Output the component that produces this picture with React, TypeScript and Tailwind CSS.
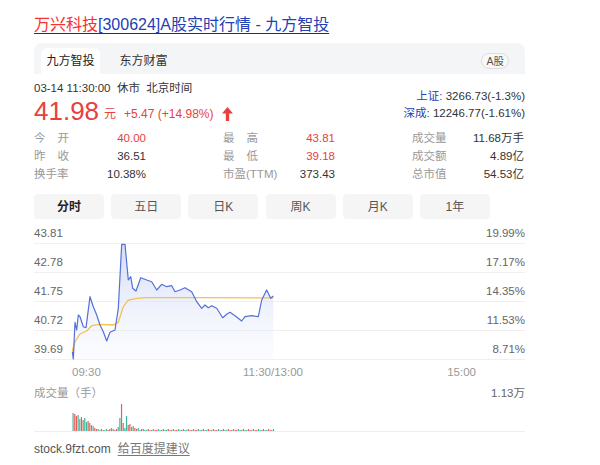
const RED = "#e8413d";

const stats = [
  [
    { label: "今开", value: "40.00", red: true },
    { label: "最高", value: "43.81", red: true },
    { label: "成交量", value: "11.68万手" },
  ],
  [
    { label: "昨收", value: "36.51" },
    { label: "最低", value: "39.18", red: true },
    { label: "成交额", value: "4.89亿" },
  ],
  [
    { label: "换手率", value: "10.38%" },
    { label: "市盈(TTM)", value: "373.43" },
    { label: "总市值", value: "54.53亿" },
  ],
];

const ranges = ["分时", "五日", "日K", "周K", "月K", "1年"];

const axisRows = [
  ["43.81", "19.99%"],
  ["42.78", "17.17%"],
  ["41.75", "14.35%"],
  ["40.72", "11.53%"],
  ["39.69", "8.71%"],
];

// price line, page coords
const pricePts: [number, number][] = [
  [72.3, 351.7], [73.3, 359], [75, 322.3], [76.7, 330], [78.3, 315], [80, 316.7],
  [83.3, 326.7], [86, 327.7], [90, 296.7], [93.3, 306.7], [96.7, 315], [100, 325],
  [103.3, 331.7], [106.7, 341], [110, 332.3], [115, 330], [118.3, 308.3], [121.7, 244.3],
  [125, 244.3], [128.3, 280], [130.7, 276.7], [132.7, 288.3], [136, 291], [140.7, 277.7],
  [146.7, 280], [151.7, 281.7], [156.7, 290], [161.7, 284.3], [166.7, 286.7], [171.7, 285.7],
  [175, 291.7], [180, 290], [185, 287.7], [191.7, 291.7], [196.7, 301.7], [201.7, 308.3],
  [205, 305], [208.3, 307.7], [211.7, 305.7], [216.7, 308.3], [222.7, 317.7], [226.7, 314.3],
  [230, 312.3], [235, 315.7], [241.7, 321], [245, 316.7], [251.7, 315.7], [258.3, 316.7],
  [261.7, 300], [266.7, 290], [270.7, 298.3], [273.3, 296],
];

const avgPts: [number, number][] = [
  [72.3, 351], [75, 341.7], [80, 334], [86.7, 331], [91.7, 325.7], [100, 324.3],
  [113.3, 325], [118.3, 322.3], [123.3, 306.7], [128.3, 300], [136.7, 298.3],
  [146.7, 297.7], [200, 297.7], [273.3, 297.9],
];

const toPath = (pts: [number, number][]) =>
  pts.map(([x, y], i) => `${i ? "L" : "M"}${x} ${y}`).join(" ");

const head = [18, 17, 15, 16, 12, 14, 11, 13, 9, 10, 8, 6, 5, 3, 2, 2, 1, 2, 1, 1, 2, 1, 2, 3, 2, 1, 2, 4, 13, 27, 8, 3, 15, 6, 7, 4, 5, 3, 2, 3, 1, 2];
const volumes = Array.from({ length: 121 }, (_, i) =>
  i < head.length ? head[i] : 1 + ((i * 7) % 3 === 0 ? 1 : 0)
);

function StatCell({ label, value, red }: { label: string; value: string; red?: boolean }) {
  const isShort = label.length === 2;
  return (
    <div className="flex items-center justify-between">
      <span
        className={`shrink-0 whitespace-nowrap text-[#999] ${isShort ? "w-[35px] [text-align-last:justify]" : ""}`}
      >
        {label}
      </span>
      <span className={red ? "text-[#e8413d]" : "text-[#333]"}>{value}</span>
    </div>
  );
}

export default function App() {
  return (
    <div className="w-[600px] h-[465px] bg-white pl-[34px] pt-[15px] font-['Liberation_Sans','Noto_Sans_CJK_SC',sans-serif] text-[11.5px] text-[#333]">
      <div className="w-[491px]">
        {/* title */}
        <div className="text-[16px] leading-[20px] underline underline-offset-[3px] whitespace-nowrap">
          <span className="text-[#f73131]">万兴科技</span>
          <span className="text-[#2440b3]">[300624]A股实时行情 - 九方智投</span>
        </div>

        {/* source tabs */}
        <div className="mt-[8px] h-[31px] rounded-t-[8px] bg-[#f4f5f7] flex items-end justify-between pl-[7px] pr-[16px]">
          <div className="flex gap-[14px] text-[12px]">
            <div className="w-[59px] h-[26px] rounded-t-[6px] bg-white flex items-center justify-center text-[#222]">
              九方智投
            </div>
            <div className="w-[59px] h-[26px] flex items-center justify-center text-[#333]">东方财富</div>
          </div>
          <div className="mb-[5px] h-[16px] px-[4px] rounded-full border border-[#ddd] bg-[#f8f8f8] text-[10.5px] leading-[14px] text-[#555]">
            A股
          </div>
        </div>

        {/* quote */}
        <div className="mt-[6px] flex justify-between">
          <div>
            <div className="h-[16px] leading-[16px] whitespace-nowrap">
              03-14 11:30:00&nbsp;&nbsp;休市&nbsp;&nbsp;北京时间
            </div>
            <div className="h-[30px] flex items-center gap-[5px] text-[#e8413d]">
              <span className="text-[26px] leading-[30px]">41.98</span>
              <span className="text-[12px] mt-[5px]">元</span>
              <span className="text-[12px] mt-[5px] ml-[3px]">+5.47 (+14.98%)</span>
              <svg width="11" height="14" viewBox="0 0 11 14" className="mt-[5px] ml-[3px]">
                <polygon points="5.5,0 11,6.5 7.2,6.5 7.2,14 3.8,14 3.8,6.5 0,6.5" fill={RED} />
              </svg>
            </div>
          </div>
          <div className="pt-[8px] text-right leading-[17px] whitespace-nowrap">
            <div>
              <span className="text-[#2440b3]">上证:</span> 3266.73(-1.3%)
            </div>
            <div>
              <span className="text-[#2440b3]">深成:</span> 12246.77(-1.61%)
            </div>
          </div>
        </div>

        {/* stats */}
        <div className="mt-[3px] grid grid-cols-[112px_112px_112px] gap-x-[77px] leading-[18px]">
          {stats.map((row) => row.map((c) => <StatCell key={c.label} {...c} />))}
        </div>

        {/* ranges */}
        <div className="mt-[11px] flex gap-[7.2px] text-[12px]">
          {ranges.map((r, i) => (
            <div
              key={r}
              className={`w-[70px] h-[25px] rounded-[4px] bg-[#f5f5f6] flex items-center justify-center ${
                i === 0 ? "font-bold text-[#222]" : "text-[#555]"
              }`}
            >
              {r}
            </div>
          ))}
        </div>

        {/* price chart */}
        <div className="relative text-[#666]">
          {axisRows.map(([l, r], i) => (
            <div
              key={l}
              className={`flex items-end justify-between pb-[2px] border-b border-[#f0f0f0] leading-[16px] ${
                i === 0 ? "h-[25px]" : "h-[29px]"
              }`}
            >
              <span>{l}</span>
              <span>{r}</span>
            </div>
          ))}
          <svg className="absolute left-0 top-0" width="491" height="141" viewBox="34 219 491 141">
            <defs>
              <linearGradient id="pf" x1="0" y1="0" x2="0" y2="1">
                <stop offset="0" stopColor="#c9d3f5" stopOpacity="0.8" />
                <stop offset="1" stopColor="#eef1fc" stopOpacity="0.2" />
              </linearGradient>
            </defs>
            <path d={`${toPath(pricePts)} L273.3 360 L72.3 360 Z`} fill="url(#pf)" />
            <path d={toPath(avgPts)} fill="none" stroke="#f2c14e" strokeWidth="1.3" />
            <path d={toPath(pricePts)} fill="none" stroke="#5470d6" strokeWidth="1.2" strokeLinejoin="round" />
          </svg>
        </div>

        {/* time axis */}
        <div className="relative mt-[4px] h-[16px] leading-[16px] text-[#999]">
          <span className="absolute left-[38px]">09:30</span>
          <span className="absolute left-[239px] w-[0px] flex justify-center whitespace-nowrap">
            <span>11:30/13:00</span>
          </span>
          <span className="absolute right-[49px]">15:00</span>
        </div>

        {/* volume */}
        <div className="mt-[5px] h-[16px] leading-[16px] flex justify-between text-[#999]">
          <span>成交量（手）</span>
          <span className="text-[#666]">1.13万</span>
        </div>
        <div className="h-[31px] border-b border-[#eee]">
          <svg width="491" height="30" viewBox="34 401 491 30">
            {volumes.map((h, i) => (
              <rect
                key={i}
                x={72.5 + i * 1.67}
                y={431 - h}
                width="1.2"
                height={h}
                fill={(i * 5 + (i >> 2)) % 3 === 0 ? "#3cb89a" : "#e85d5d"}
              />
            ))}
          </svg>
        </div>

        {/* footer */}
        <div className="mt-[9px] h-[16px] leading-[16px] flex gap-[7px] text-[12px]">
          <span className="text-[#555]">stock.9fzt.com</span>
          <span className="text-[#777] underline underline-offset-2">给百度提建议</span>
        </div>
      </div>
    </div>
  );
}
